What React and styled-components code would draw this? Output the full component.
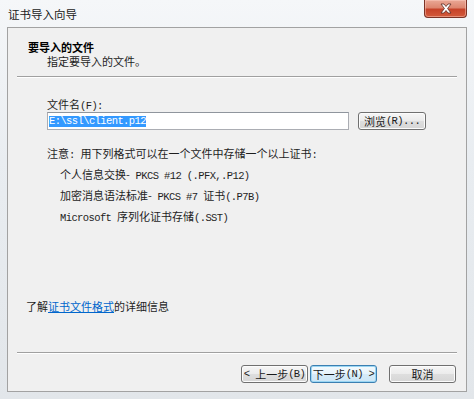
import React from 'react';
import styled, { createGlobalStyle } from 'styled-components';

const GlobalStyle = createGlobalStyle`
  html, body {
    margin: 0;
    padding: 0;
  }
  body {
    width: 474px;
    height: 399px;
    overflow: hidden;
    font-family: "Noto Sans CJK SC", sans-serif;
    color: #1e1e1e;
  }
`;

const Window = styled.div`
  width: 474px;
  height: 399px;
  box-sizing: border-box;
  display: flex;
  flex-direction: column;
  background: linear-gradient(180deg, #f5f7f9 0%, #e9edf1 40%, #e2e6ea 100%);
`;

const TitleBar = styled.div`
  height: 27px;
  display: flex;
  align-items: flex-start;
  justify-content: space-between;
  padding-left: 8px;
`;

const Title = styled.div`
  margin-top: 7px;
  font-size: 11.5px;
  line-height: 14px;
  color: #1a1a1a;
`;

const CloseButton = styled.div`
  width: 43px;
  height: 18px;
  margin-right: 7px;
  box-sizing: border-box;
  border: 1px solid #7b3326;
  border-top: none;
  border-radius: 0 0 4px 4px;
  background: linear-gradient(180deg, #eaa896 0%, #dd8670 45%, #c6432a 55%, #d35b3c 100%);
  box-shadow: inset 0 0 0 1px rgba(255, 210, 200, 0.45);
  display: flex;
  align-items: center;
  justify-content: center;
`;

const Panel = styled.div`
  margin: 0 7px;
  height: 365px;
  box-sizing: border-box;
  border: 1px solid #a2a2a2;
  background: #f0f0f0;
  display: flex;
  flex-direction: column;
`;

const Header = styled.div`
  padding: 12px 0 8px 20px;
`;

const HeaderTitle = styled.div`
  font-size: 11px;
  line-height: 14px;
  font-weight: 700;
  color: #000;
`;

const HeaderSub = styled.div`
  font-size: 11px;
  line-height: 14px;
  padding-left: 19px;
`;

const Rule = styled.div`
  margin: 0 9px;
  border-top: 1px solid #a0a0a0;
  border-bottom: 1px solid #ffffff;
`;

const FileSection = styled.div`
  padding: 19px 0 0 39px;
`;

const Label = styled.div`
  height: 14px;
  font-size: 11px;
  line-height: 14px;
  margin-top: ${(p) => p.$top || 0}px;
  white-space: nowrap;
`;

const Mono = styled.span`
  font-family: "Liberation Mono", monospace;
  font-size: 10.5px;
  letter-spacing: -0.6px;
  line-height: 0;
`;

const FileRow = styled.div`
  display: flex;
  align-items: center;
  gap: 9px;
  margin-top: 1px;
`;

const FileField = styled.div`
  width: 302px;
  height: 18px;
  box-sizing: border-box;
  border: 1px solid #abadb3;
  border-top-color: #8f959d;
  background: #ffffff;
  padding: 0 1px;
  display: flex;
  align-items: center;
`;

const Selected = styled.span`
  font-family: "Liberation Mono", monospace;
  font-size: 10.5px;
  letter-spacing: -0.6px;
  line-height: 11px;
  background: #3399ff;
  color: #ffffff;
`;

const Button = styled.div`
  width: ${(p) => p.$width || 67}px;
  height: 18px;
  margin-left: ${(p) => p.$gap || 0}px;
  box-sizing: border-box;
  border: 1px solid ${(p) => (p.$focus ? '#3c7fb1' : '#707070')};
  border-radius: 3px;
  background: ${(p) =>
    p.$focus
      ? 'linear-gradient(180deg, #f4fafd 0%, #e6f3fb 50%, #d6ebf8 51%, #cde6f6 100%)'
      : 'linear-gradient(180deg, #f6f6f6 0%, #ebebeb 50%, #dedede 51%, #d6d6d6 100%)'};
  box-shadow: inset 0 0 0 1px ${(p) => (p.$focus ? '#9ad6f3' : '#fcfcfc')};
  display: flex;
  align-items: center;
  justify-content: center;
  font-size: 11px;
  line-height: 14px;
  color: #1a1a1a;
  white-space: pre;
`;

const Formats = styled.div`
  padding-left: 13px;
`;

const LinkLine = styled.div`
  margin-top: 76px;
  padding-left: 18px;
  font-size: 11px;
  line-height: 14px;
  height: 14px;
`;

const Link = styled.span`
  color: #0066cc;
  text-decoration: underline;
`;

const Footer = styled.div`
  margin-top: auto;
`;

const ButtonRow = styled.div`
  display: flex;
  justify-content: flex-end;
  gap: 2px;
  padding: 11px 10px 8px 0;
`;

const formats = [
  ['个人信息交换-', ' PKCS #12 (.PFX,.P12)', ''],
  ['加密消息语法标准-', ' PKCS #7 ', '证书', '(.P7B)'],
  ['', 'Microsoft ', '序列化证书存储', '(.SST)'],
];

const CloseGlyph = () => (
  <svg width="14" height="11" viewBox="0 0 14 11">
    <path
      d="M2 1 L5 1 L7 3.5 L9 1 L12 1 L8.6 5.5 L12 10 L9 10 L7 7.5 L5 10 L2 10 L5.4 5.5 Z"
      fill="#ffffff"
      stroke="#5a2a22"
      strokeWidth="0.8"
      strokeLinejoin="round"
    />
  </svg>
);

const App = () => (
  <>
    <GlobalStyle />
    <Window>
      <TitleBar>
        <Title>证书导入向导</Title>
        <CloseButton>
          <CloseGlyph />
        </CloseButton>
      </TitleBar>
      <Panel>
        <Header>
          <HeaderTitle>要导入的文件</HeaderTitle>
          <HeaderSub>指定要导入的文件。</HeaderSub>
        </Header>
        <Rule />
        <FileSection>
          <Label>
            文件名<Mono>(F):</Mono>
          </Label>
          <FileRow>
            <FileField>
              <Selected>E:\ssl\client.p12</Selected>
            </FileField>
            <Button $width={68}>
              浏览<Mono>(R)...</Mono>
            </Button>
          </FileRow>
          <Label $top={16}>
            注意<Mono>{': '}</Mono>用下列格式可以在一个文件中存储一个以上证书<Mono>:</Mono>
          </Label>
          <Formats>
            {formats.map(([a, b, c, d]) => (
              <Label key={b} $top={7}>
                {a}
                <Mono>{b}</Mono>
                {c}
                {d && <Mono>{d}</Mono>}
              </Label>
            ))}
          </Formats>
        </FileSection>
        <LinkLine>
          了解<Link>证书文件格式</Link>的详细信息
        </LinkLine>
        <Footer>
          <Rule />
          <ButtonRow>
            <Button>
              <Mono>{'< '}</Mono>上一步<Mono>(B)</Mono>
            </Button>
            <Button $focus>
              下一步<Mono>{'(N) >'}</Mono>
            </Button>
            <Button $gap={10}>取消</Button>
          </ButtonRow>
        </Footer>
      </Panel>
    </Window>
  </>
);

export default App;
